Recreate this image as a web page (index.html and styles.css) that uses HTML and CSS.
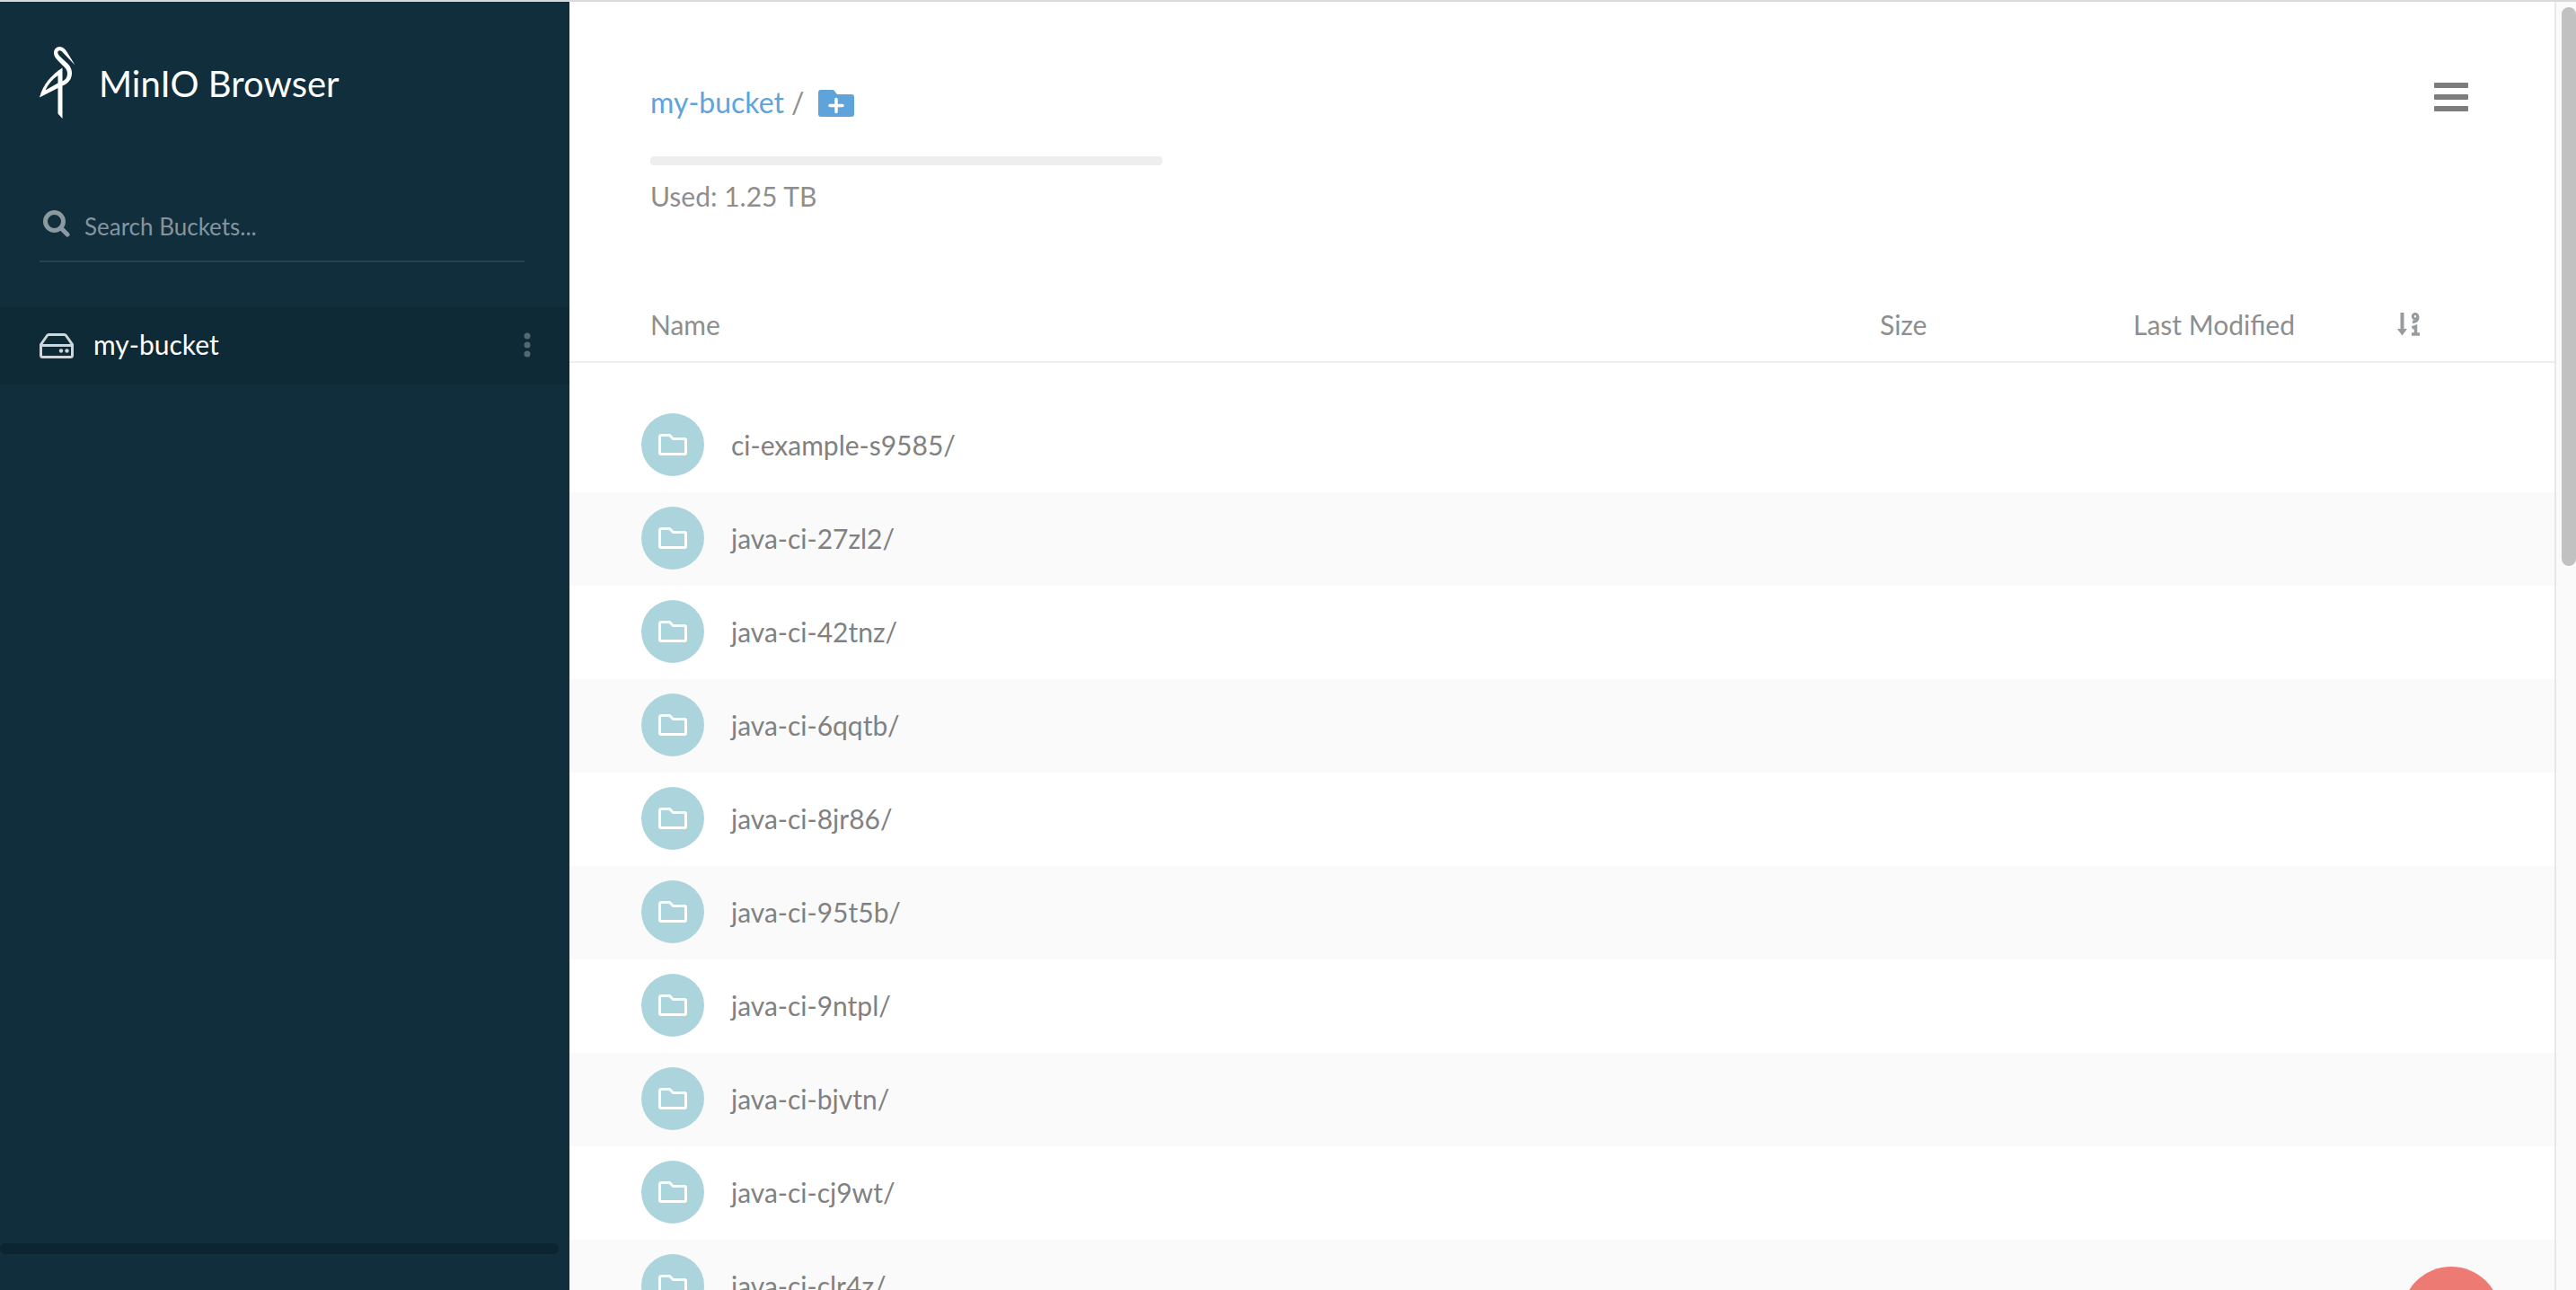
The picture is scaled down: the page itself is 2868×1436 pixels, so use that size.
FILE: index.html
```html
<!DOCTYPE html>
<html lang="en">
<head>
  <meta charset="UTF-8" />
  <meta name="viewport" content="width=device-width, initial-scale=1.0" />
  <title>MinIO Browser</title>
  <link rel="stylesheet" href="styles.css">
</head>
<body>
  <!-- folder shape shared by all rows -->
  <svg class="defs" aria-hidden="true">
    <symbol id="folder" viewBox="0 0 32 24">
      <path d="M3 1.5h9.500l4 4H29a1.500 1.500 0 0 1 1.500 1.500V21a1.500 1.500 0 0 1-1.500 1.500H3A1.500 1.500 0 0 1 1.500 21V3A1.500 1.500 0 0 1 3 1.500z" fill="none" stroke="#fff" stroke-width="3"/>
    </symbol>
  </svg>

  <div class="page">
    <aside class="sidebar">
      <div class="logo">
        <svg width="40" height="80" viewBox="0 0 40 80" fill="none" aria-hidden="true">
          <path d="M39.500 20.500L31 6.500C28.500 2.200 26 0 22.500 0C18.500 0 16 3 16 7C16 10 17.500 12.500 20.500 15.500L27 22C30 25 31 27 31 30C31 34 29 37 25.500 38.500V23.500C13 31.500 4 42 0 56.500L20.500 46V74.500L25.500 80V43.500C32 41 36 36 36 29.500C36 25.500 34.500 22 31.500 19L23 11C21 9 20.300 8 20.300 6.500C20.300 5 21.200 4.200 22.500 4.200C24 4.200 25 5 26.500 7zM20.500 32V40.500L6.500 48.500C9.500 42 14 36.500 20.500 32z" fill="#fff" fill-rule="evenodd"/>
        </svg>
        <h1>MinIO Browser</h1>
      </div>

      <label class="search">
        <svg width="30" height="30" viewBox="0 0 30 30" fill="none" stroke="#8b9aa1" aria-hidden="true">
          <circle cx="12.500" cy="12.500" r="10" stroke-width="5"/>
          <path d="M20 20l7 7" stroke-width="5" stroke-linecap="round"/>
        </svg>
        <input type="text" placeholder="Search Buckets..." aria-label="Search Buckets">
      </label>

      <div class="bucket active">
        <svg width="38" height="32" viewBox="0 0 38 32" fill="none" stroke="#cfd5d8" stroke-width="3" aria-hidden="true">
          <path d="M1.500 15.500L8.500 5.500Q9.200 4.500 10.500 4.500H27.500Q28.800 4.500 29.500 5.500L36.500 15.500V27.500Q36.500 29.500 34.500 29.500H3.500Q1.500 29.500 1.500 27.500zM1.500 16.500H36.500"/>
          <circle cx="24" cy="22.500" r="2.200" fill="#cfd5d8" stroke="none"/>
          <circle cx="30.500" cy="22.500" r="2.200" fill="#cfd5d8" stroke="none"/>
        </svg>
        <a href="#my-bucket">my-bucket</a>
        <button class="dots" aria-label="Bucket actions">
          <svg width="8" height="28" viewBox="0 0 8 28" fill="#56686f">
            <circle cx="4" cy="4" r="3.500"/><circle cx="4" cy="14" r="3.500"/><circle cx="4" cy="24" r="3.500"/>
          </svg>
        </button>
      </div>

      <div class="side-scroll"></div>
    </aside>

    <main class="content">
      <header class="top">
        <div class="info">
          <nav class="path">
            <a href="#my-bucket">my-bucket</a>
            <span>/</span>
            <button aria-label="Create folder">
              <svg width="40" height="30" viewBox="0 0 40 30">
                <path d="M3 0H17L21 5H37Q40 5 40 8V27Q40 30 37 30H3Q0 30 0 27V3Q0 0 3 0z" fill="#5ea3da"/>
                <path d="M20 10.500V24.500M13 17.500H27" stroke="#fff" stroke-width="3.500" stroke-linecap="round"/>
              </svg>
            </button>
          </nav>
          <div class="usage"></div>
          <p>Used: 1.25 TB</p>
        </div>
        <button class="menu" aria-label="Menu">
          <svg width="38" height="32" viewBox="0 0 38 32" fill="#7d7d7d">
            <rect width="38" height="6" rx="1"/><rect y="13" width="38" height="6" rx="1"/><rect y="26" width="38" height="6" rx="1"/>
          </svg>
        </button>
      </header>

      <table class="objects">
        <thead>
          <tr>
            <th class="name">Name</th>
            <th class="size">Size</th>
            <th class="modified">Last Modified</th>
            <th class="sort">
              <button aria-label="Sort by last modified">
                <svg width="26" height="26" viewBox="0 0 26 26" fill="none" stroke="#999c9e" aria-hidden="true">
                  <path d="M5.500 0V19" stroke-width="4"/>
                  <path d="M0 18H11L5.500 25.500z" fill="#999c9e" stroke="none"/>
                  <circle cx="20" cy="4.200" r="2.700" stroke-width="3"/>
                  <path d="M22.700 4V6.500Q22 10 17 10.500M16.500 17L20.500 15.500V24M16 24H25" stroke-width="3.500"/>
                </svg>
              </button>
            </th>
          </tr>
        </thead>
        <tbody>
          <tr><td colspan="4"><a href="#"><i><svg><use href="#folder"/></svg></i>ci-example-s9585/</a></td></tr>
          <tr><td colspan="4"><a href="#"><i><svg><use href="#folder"/></svg></i>java-ci-27zl2/</a></td></tr>
          <tr><td colspan="4"><a href="#"><i><svg><use href="#folder"/></svg></i>java-ci-42tnz/</a></td></tr>
          <tr><td colspan="4"><a href="#"><i><svg><use href="#folder"/></svg></i>java-ci-6qqtb/</a></td></tr>
          <tr><td colspan="4"><a href="#"><i><svg><use href="#folder"/></svg></i>java-ci-8jr86/</a></td></tr>
          <tr><td colspan="4"><a href="#"><i><svg><use href="#folder"/></svg></i>java-ci-95t5b/</a></td></tr>
          <tr><td colspan="4"><a href="#"><i><svg><use href="#folder"/></svg></i>java-ci-9ntpl/</a></td></tr>
          <tr><td colspan="4"><a href="#"><i><svg><use href="#folder"/></svg></i>java-ci-bjvtn/</a></td></tr>
          <tr><td colspan="4"><a href="#"><i><svg><use href="#folder"/></svg></i>java-ci-cj9wt/</a></td></tr>
          <tr><td colspan="4"><a href="#"><i><svg><use href="#folder"/></svg></i>java-ci-clr4z/</a></td></tr>
        </tbody>
      </table>
      <button class="add" aria-label="Add"></button>
    </main>

    <div class="scrollbar"><div class="thumb"></div></div>
  </div>
</body>
</html>
```

FILE: styles.css
```css
* {
  box-sizing: border-box;
}
body {
  margin: 0;
  font-family: Lato, sans-serif;
  font-size: 30px;
  line-height: 40px;
  color: #8e8e8e;
  background: #fff;
}
a {
  color: inherit;
  text-decoration: none;
}
button {
  padding: 0;
  border: none;
  background: none;
  cursor: pointer;
}
svg {
  display: block;
}
.defs {
  display: none;
}
.page {
  display: flex;
  height: 100vh;
  overflow: hidden;
  border-top: 2px solid #d9dadd;
}

/* sidebar */
.sidebar {
  width: 634px;
  flex-shrink: 0;
  display: flex;
  flex-direction: column;
  background: #102e3b;
}
.logo {
  display: flex;
  align-items: center;
  gap: 26px;
  padding: 50px 44px 0;
}
.logo h1 {
  margin: 0;
  padding-top: 2px;
  font-size: 40px;
  font-weight: 400;
  color: #fff;
}
.search {
  display: flex;
  align-items: flex-start;
  gap: 16px;
  height: 76px;
  margin: 84px 50px 50px 44px;
  padding: 18px 0 0 4px;
  border-bottom: 2px solid #264350;
}
.search input {
  flex: 1;
  height: 36px;
  padding: 0;
  border: none;
  outline: none;
  background: none;
  font: inherit;
  font-size: 26px;
  line-height: 36px;
  color: #fff;
}
.search input::placeholder {
  color: #8495a0;
  opacity: 1;
}
.bucket {
  display: flex;
  align-items: center;
  gap: 22px;
  height: 86px;
  padding: 0 43px 2px 44px;
  color: #fff;
}
.bucket a {
  padding-bottom: 2px;
}
.bucket.active {
  background: #0e2a36;
}
.bucket .dots {
  margin-left: auto;
}
.side-scroll {
  height: 12px;
  margin: auto 12px 40px 0;
  border-radius: 6px;
  background: #0d2530;
}

/* content */
.content {
  flex: 1;
  position: relative;
}
.top {
  display: flex;
  justify-content: space-between;
  height: 320px;
  padding: 90px 96px 0 90px;
}
.info {
  width: 570px;
}
.path {
  display: flex;
  align-items: center;
  height: 46px;
  font-size: 32px;
}
.path a,
.path span {
  padding-bottom: 2px;
}
.path a {
  color: #5ea3da;
}
.path span {
  margin: 0 16px 0 8px;
}
.usage {
  height: 10px;
  margin-top: 36px;
  border-radius: 4px;
  background: #eee;
}
.info p {
  margin: 14px 0 0;
}
.menu {
  align-self: flex-start;
}
.objects {
  width: 100%;
  border-spacing: 0;
  table-layout: fixed;
}
.objects th {
  height: 82px;
  padding: 0 0 2px;
  border-bottom: 2px solid #eee;
  font-weight: 400;
  text-align: left;
}
.objects .name {
  padding-left: 90px;
}
.objects .size {
  width: 282px;
}
.objects .modified {
  width: 294px;
}
.objects .sort {
  width: 175px;
  padding: 0;
}
.objects tbody::before {
  content: "";
  display: block;
  height: 40px;
}
.objects td {
  height: 104px;
  padding: 0 0 2px 80px;
}
.objects tbody tr:nth-child(even) {
  background: #fafafa;
}
.objects td a {
  display: flex;
  align-items: center;
  gap: 30px;
  color: #818181;
}
.objects i {
  display: flex;
  align-items: center;
  justify-content: center;
  width: 70px;
  height: 70px;
  border-radius: 50%;
  background: #acd4dc;
}
.objects i svg {
  width: 32px;
  height: 24px;
}
.add {
  position: absolute;
  right: 60px;
  bottom: -84px;
  width: 110px;
  height: 110px;
  border-radius: 50%;
  background: #ee7a74;
}

/* page scrollbar */
.scrollbar {
  width: 24px;
  padding: 6px 0 0 6px;
  border-left: 2px solid #e8e8e8;
  background: #fafafa;
}
.thumb {
  height: 622px;
  border-radius: 8px;
  background: #c1c1c1;
}
```
